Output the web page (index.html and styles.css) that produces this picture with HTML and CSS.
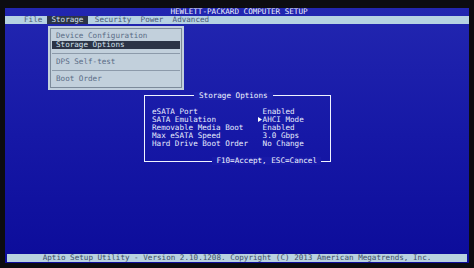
FILE: index.html
```html
<!DOCTYPE html>
<html>
<head>
<meta charset="utf-8">
<link rel="stylesheet" href="styles.css">
</head>
<body>
<div class="screen">
  <div class="title">HEWLETT-PACKARD COMPUTER SETUP</div>
  <div class="menubar">
    <span class="menu-item">File</span>
    <span class="menu-item active">Storage</span>
    <span class="menu-item sec">Security</span>
    <span class="menu-item wide">Power</span>
    <span class="menu-item wide">Advanced</span>
  </div>
  <div class="dropdown">
    <div class="dropdown-inner">
      <div class="dd-item">Device Configuration</div>
      <div class="dd-item selected">Storage Options</div>
      <div class="dd-sep"></div>
      <div class="dd-item">DPS Self-test</div>
      <div class="dd-sep"></div>
      <div class="dd-item">Boot Order</div>
    </div>
  </div>
  <div class="dialog">
    <div class="dialog-title">Storage Options</div>
    <div class="dialog-rows">
      <div class="label">eSATA Port</div><div class="value">Enabled</div>
      <div class="label">SATA Emulation</div><div class="value"><svg class="arrow" width="4" height="5" viewBox="0 0 4 5"><path d="M0 0 L4 2.5 L0 5 Z" fill="#ffffff"/></svg>AHCI Mode</div>
      <div class="label">Removable Media Boot</div><div class="value">Enabled</div>
      <div class="label">Max eSATA Speed</div><div class="value">3.0 Gbps</div>
      <div class="label">Hard Drive Boot Order</div><div class="value">No Change</div>
    </div>
    <div class="dialog-footer">F10=Accept, ESC=Cancel</div>
  </div>
  <div class="spacer"></div>
  <div class="statusbar">Aptio Setup Utility - Version 2.10.1208. Copyright (C) 2013 American Megatrends, Inc.</div>
</div>
</body>
</html>
```
FILE: styles.css
```css
html, body {
  margin: 0;
  padding: 0;
}
body {
  width: 474px;
  height: 268px;
  overflow: hidden;
  background: #0c0c10;
  font-family: "DejaVu Sans Mono", "Liberation Mono", monospace;
  font-size: 7.6px;
  color: #e8eeff;
}
.screen {
  margin: 8px 5px 0 5px;
  height: 255px;
  background: linear-gradient(180deg, #2226b0 0%, #1618a6 50%, #0c0c9a 100%);
  display: flex;
  flex-direction: column;
}
.title {
  height: 8px;
  line-height: 8px;
  text-align: center;
  padding-left: 4px;
  color: #eef2ff;
}
.menubar {
  height: 8px;
  line-height: 8px;
  background: #b6d2e2;
  padding-left: 19px;
  display: flex;
  color: #4a5a74;
  white-space: pre;
}
.menu-item.active {
  margin-left: 1ch;
  padding: 0 1ch;
  background: #2c3446;
  color: #d4e2ee;
}
.menu-item.sec {
  margin-left: 1.5ch;
}
.menu-item.wide {
  margin-left: 2ch;
}
.dropdown {
  margin: 2px 0 0 43px;
  width: 136px;
  padding: 2px;
  box-sizing: border-box;
  background: #c2d0dc;
}
.dropdown-inner {
  border: 1px solid #7c8a9a;
  padding: 3px 1px 4px 1px;
}
.dd-item {
  height: 8.5px;
  line-height: 8.5px;
  padding-left: 4px;
  color: #5a6c86;
  white-space: pre;
}
.dd-item.selected {
  background: #2c3446;
  color: #d6e2ee;
}
.dd-sep {
  height: 8.5px;
  box-sizing: border-box;
  padding-top: 4px;
}
.dd-sep::before {
  content: "";
  display: block;
  border-top: 1px solid #8c9aaa;
}
.dialog {
  margin: 5px 0 0 139px;
  width: 187px;
  border: 1px solid #f0f4ff;
  box-sizing: border-box;
}
.dialog-title {
  margin: -4.5px 0 0 49px;
  width: fit-content;
  padding: 0 5px;
  height: 8px;
  line-height: 8px;
  background: #1e22ae;
  color: #f2f5ff;
}
.dialog-rows {
  margin-top: 8px;
  padding-left: 7px;
  display: grid;
  grid-template-columns: 106px auto;
  line-height: 8px;
  white-space: pre;
}
.value {
  padding-left: 4.6px;
  position: relative;
}
.arrow {
  position: absolute;
  left: 0;
  top: 1.5px;
}
.dialog-footer {
  margin: 9px 9px -4px auto;
  width: fit-content;
  padding: 0 4px;
  height: 8px;
  line-height: 8px;
  background: #181aa8;
  color: #f2f5ff;
}
.spacer {
  flex: 1;
}
.statusbar {
  margin: 0 2px 1px 2px;
  height: 8px;
  line-height: 8px;
  background: #b8d2e0;
  color: #3c4c64;
  text-align: center;
  white-space: pre;
}
```
